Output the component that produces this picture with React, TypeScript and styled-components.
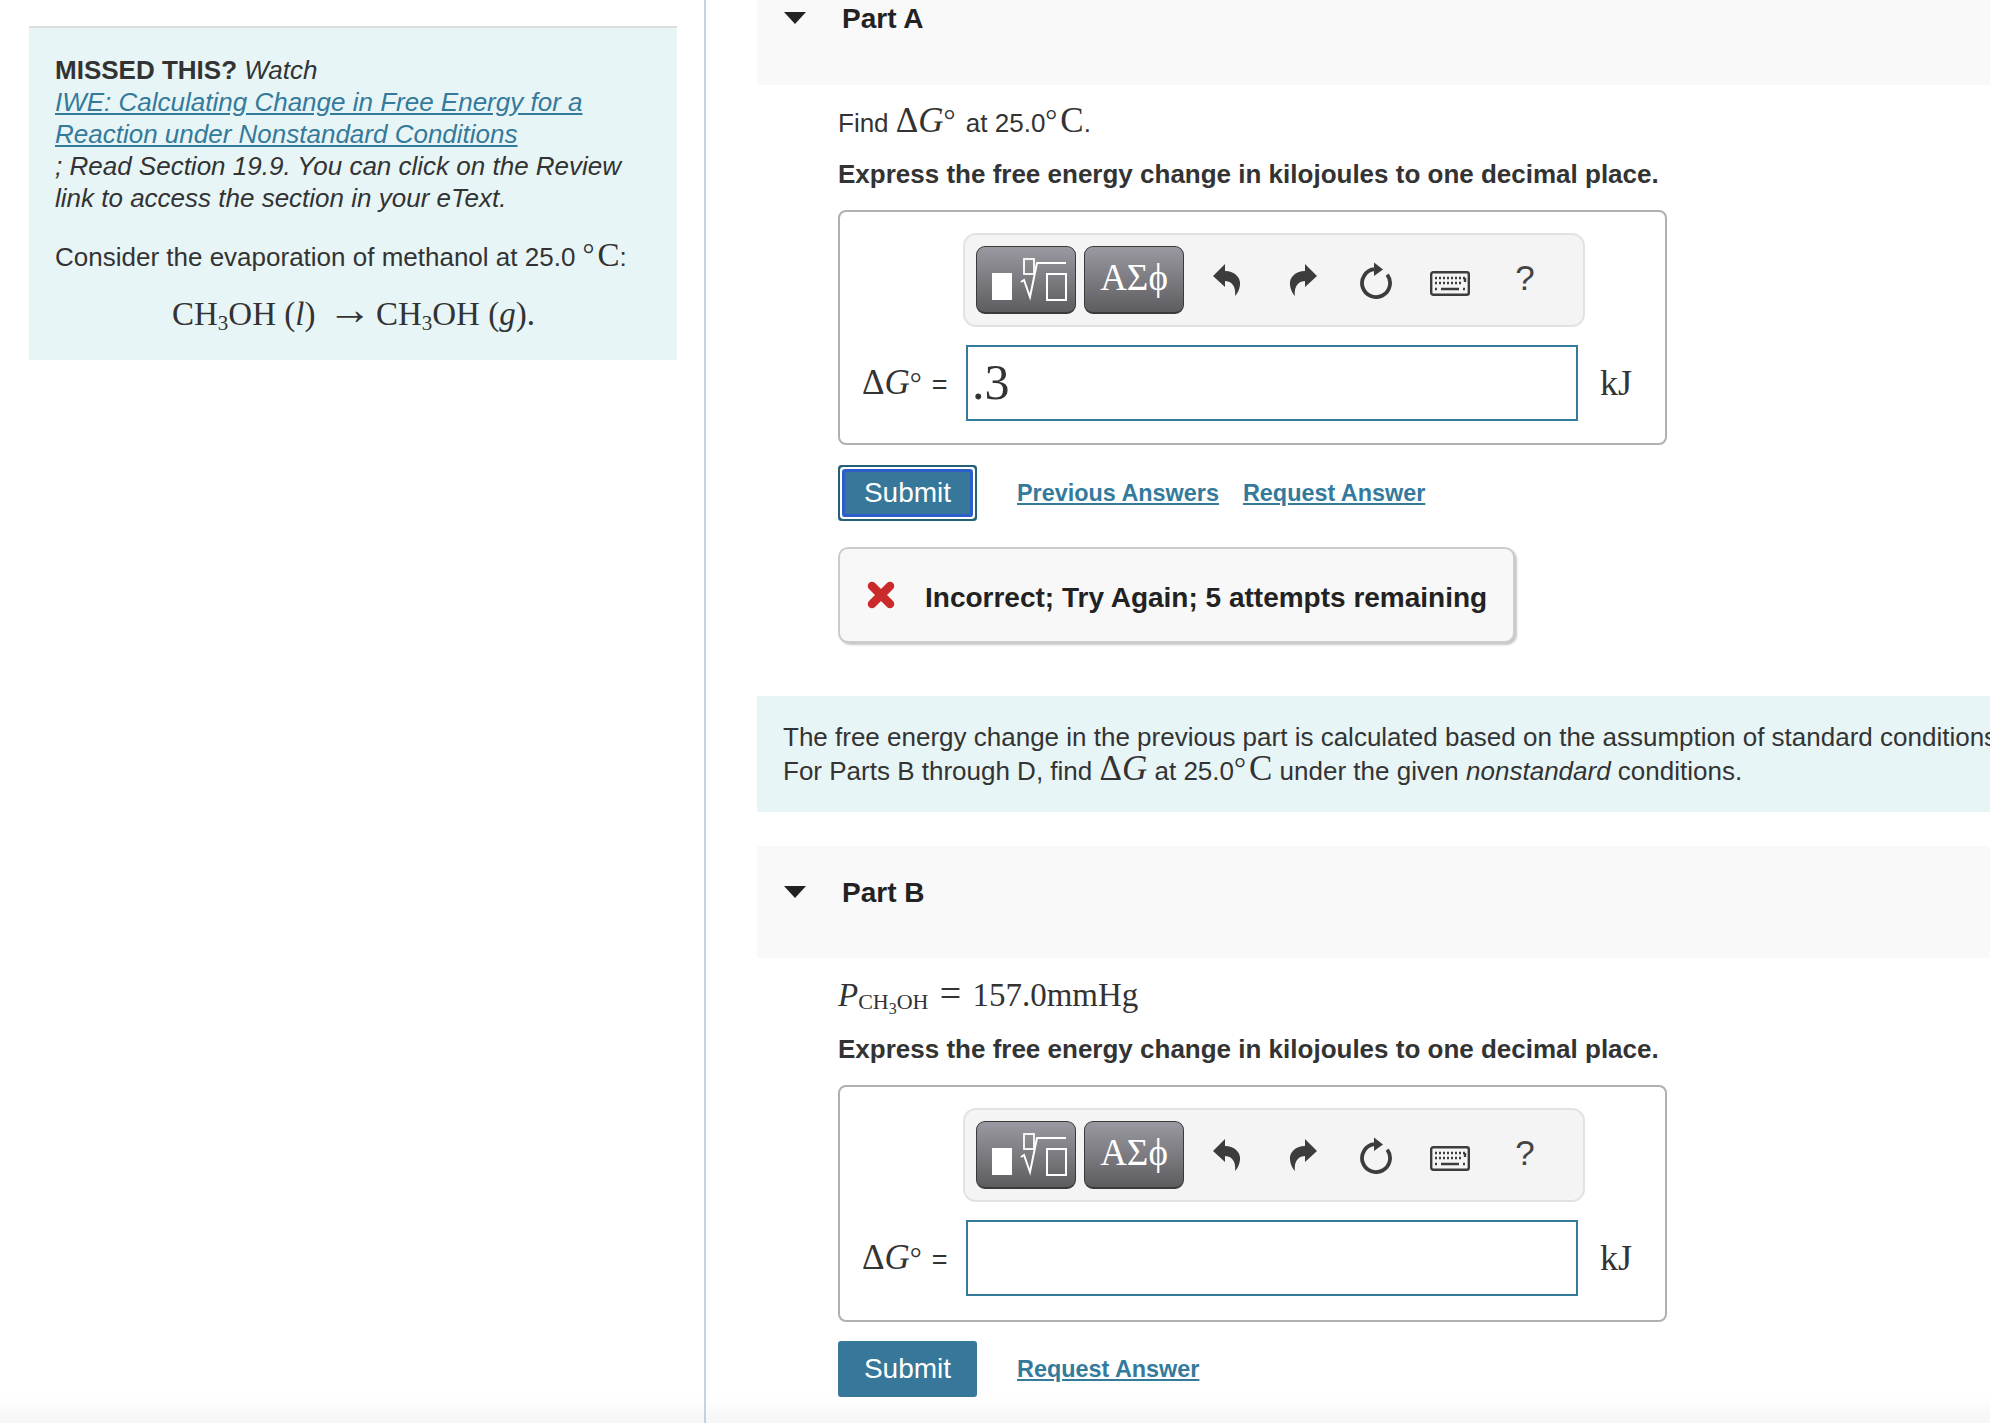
import styled, { createGlobalStyle } from "styled-components"

const GlobalStyle = createGlobalStyle`
    html, body {
        margin: 0;
        padding: 0;
        height: 100%;
        overflow: hidden;
        background: #ffffff;
    }
    body {
        font-family: "Liberation Sans", Arial, sans-serif;
        color: #333333;
    }
`

const Page = styled.div`
    display: grid;
    grid-template-columns: 704px 1fr;
    width: 1990px;
    height: 1423px;
    overflow: hidden;
    background: linear-gradient(to bottom, #ffffff 1396px, #f6f6f6 1423px);
`

const LeftPane = styled.aside`
    padding: 26px 27px 0 29px;
    border-right: 2px solid #c6d2e2;
    width: 706px;
    box-sizing: border-box;
`

const Hint = styled.div`
    background: #e8f5f6;
    border-top: 2px solid #dddddd;
    padding: 26px 26px 0;
    height: 334px;
    box-sizing: border-box;
    font-size: 26px;
    line-height: 32px;
`

const Para = styled.p`
    margin: 0;
`

const HintLink = styled.a`
    color: #347a9b;
    text-decoration: underline;
`

const Consider = styled.p`
    margin: 25px 0 0;
    white-space: nowrap;
`

const Equation = styled.div`
    font-family: "Liberation Serif", serif;
    font-size: 33px;
    line-height: 40px;
    margin-top: 21px;
    padding-left: 117px;
    white-space: nowrap;
`

const Sub = styled.sub`
    font-size: 21px;
    line-height: 0;
    vertical-align: -5px;
`

const Arrow = styled.span`
    display: inline-block;
    margin: 0 -4px 0 4px;
    font-size: 44px;
    line-height: 0;
    vertical-align: 1px;
`

const Serif = styled.span<{ $size?: number }>`
    font-family: "Liberation Serif", serif;
    font-size: ${(p) => p.$size ?? 35}px;
`

const Degree = styled.span`
    margin-right: 3px;
    font-family: "Liberation Serif", serif;
    font-size: 30px;
    line-height: 0;
    vertical-align: 2px;
`

const RightPane = styled.main`
    margin-left: 53px;
    min-width: 0;
    width: 1233px;
`

const PartHeader = styled.header<{ $height: number; $top: number }>`
    display: flex;
    align-items: flex-start;
    height: ${(p) => p.$height}px;
    padding: ${(p) => p.$top}px 0 0 27px;
    box-sizing: border-box;
    background: #f9f9f9;
`

const Caret = styled.span`
    width: 0;
    height: 0;
    margin-top: 10px;
    border-left: 11px solid transparent;
    border-right: 11px solid transparent;
    border-top: 12px solid #222222;
`

const PartTitle = styled.h2`
    margin: 1px 0 0 36px;
    font-size: 28px;
    line-height: 32px;
    font-weight: 700;
    color: #222222;
`

const PartBody = styled.section`
    padding-left: 81px;
`

const Prompt = styled.p`
    margin: 0;
    padding-top: 17px;
    height: 73px;
    box-sizing: border-box;
    font-size: 26px;
    line-height: 38px;
    white-space: nowrap;
`

const Instruction = styled.p`
    margin: 0;
    font-size: 26px;
    line-height: 32px;
    font-weight: 700;
    white-space: nowrap;
`

const AnswerBox = styled.div<{ $height: number }>`
    display: grid;
    grid-template-columns: 104px 612px 1fr;
    align-content: start;
    width: 829px;
    height: ${(p) => p.$height}px;
    margin-top: 20px;
    padding: 21px 22px 0;
    box-sizing: border-box;
    border: 2px solid #b0b0b0;
    border-radius: 8px;
`

const Toolbar = styled.div`
    grid-column: 2 / 4;
    display: flex;
    align-items: center;
    width: 622px;
    height: 94px;
    margin-left: -3px;
    padding-left: 11px;
    box-sizing: border-box;
    background: #f4f4f4;
    border: 2px solid #e2e2e2;
    border-radius: 13px;
`

const ToolButton = styled.div`
    display: flex;
    align-items: center;
    justify-content: center;
    width: 100px;
    height: 68px;
    margin-right: 8px;
    box-sizing: border-box;
    border: 1px solid #3a3a3a;
    border-bottom-width: 2px;
    border-radius: 9px;
    background: linear-gradient(to bottom, #9a99a1, #5d5d60);
    color: #ffffff;
`

const GreekLabel = styled.span`
    padding-bottom: 4px;
    font-family: "Liberation Serif", serif;
    font-size: 37px;
    line-height: 1;
`

const IconSlot = styled.div<{ $width: number; $drop?: number }>`
    display: flex;
    align-items: center;
    justify-content: center;
    width: ${(p) => p.$width}px;
    height: 64px;
    padding-top: ${(p) => p.$drop ?? 0}px;
    box-sizing: border-box;
    color: #3c3c3c;
`

const HelpMark = styled.span`
    margin-top: -4px;
    font-size: 35px;
    color: #444444;
`

const Label = styled.div`
    display: flex;
    align-items: center;
    margin-top: 18px;
    white-space: nowrap;
`

const Equals = styled.span`
    font-family: "Liberation Sans", sans-serif;
    font-size: 27px;
    margin: 4px 0 0 7px;
`

const Input = styled.div`
    display: flex;
    align-items: center;
    height: 76px;
    margin-top: 18px;
    padding: 0 0 3px 4px;
    box-sizing: border-box;
    border: 2px solid #347a9b;
    font-family: "Liberation Serif", serif;
    font-size: 50px;
    color: #333333;
`

const Unit = styled.div`
    display: flex;
    align-items: center;
    margin: 18px 0 0 22px;
    font-family: "Liberation Serif", serif;
    font-size: 36px;
`

const Actions = styled.div<{ $top: number }>`
    display: flex;
    align-items: center;
    margin-top: ${(p) => p.$top}px;
`

const SubmitButton = styled.div<{ $focused?: boolean }>`
    display: flex;
    align-items: center;
    justify-content: center;
    width: ${(p) => (p.$focused ? 125 : 139)}px;
    height: ${(p) => (p.$focused ? 42 : 56)}px;
    margin: ${(p) => (p.$focused ? "7px" : "0")};
    box-sizing: border-box;
    border-radius: ${(p) => (p.$focused ? "1px" : "3px")};
    background: #36779a;
    color: #ffffff;
    font-size: 28px;
    box-shadow: ${(p) => (p.$focused ? "0 0 0 3px #2d5fcb, 0 0 0 5px #ffffff, 0 0 0 7px #256078" : "none")};
`

const ActionLink = styled.a`
    margin-left: 24px;
    color: #347a9b;
    font-size: 23.4px;
    font-weight: 700;
    text-decoration: underline;
    white-space: nowrap;
    &:first-of-type {
        margin-left: 40px;
    }
`

const Feedback = styled.div`
    display: flex;
    align-items: center;
    width: 677px;
    height: 96px;
    margin-top: 26px;
    padding-left: 26px;
    box-sizing: border-box;
    background: #f8f8f8;
    border: 2px solid #cccccc;
    border-radius: 10px;
    box-shadow: 2px 2px 2px #c8c8c8;
`

const FeedbackText = styled.span`
    margin-left: 29px;
    padding-top: 6px;
    font-size: 28px;
    font-weight: 700;
    color: #222222;
    white-space: nowrap;
`

const Note = styled.div`
    height: 116px;
    margin-top: 53px;
    padding: 25px 0 0 26px;
    box-sizing: border-box;
    background: #e8f5f6;
    font-size: 26px;
    line-height: 32px;
    white-space: nowrap;
    overflow: hidden;
`

const PressureLine = styled.p`
    margin: 0;
    padding-top: 16px;
    height: 75px;
    box-sizing: border-box;
    font-family: "Liberation Serif", serif;
    font-size: 33px;
    line-height: 42px;
    white-space: nowrap;
`

const PressureSub = styled.sub`
    font-size: 22px;
    line-height: 0;
    vertical-align: -3px;
`

const TinySub = styled.sub`
    font-size: 16px;
    line-height: 0;
    vertical-align: -5px;
`

const PressureEquals = styled.span`
    margin: 0 3px;
    font-size: 38px;
    line-height: 0;
`

const PartBHeading = styled.div`
    margin-top: 34px;
`

const UndoIcon = ({ flip }: { flip?: boolean }) => (
    <svg width="28" height="32" viewBox="0 0 28 32" style={flip ? { transform: "scaleX(-1)" } : undefined}>
        <path
            fill="currentColor"
            d="M0 12 L12 0 V7 C22 7 28 14 27 21 C26.5 26 24 30 22 32 C23 26 21 17 12 17 V23 Z"
        />
    </svg>
)

const RefreshIcon = () => (
    <svg width="34" height="38" viewBox="0 0 34 38">
        <path fill="none" stroke="currentColor" strokeWidth="3.8" d="M28.2 13.6 A14 14 0 1 1 15 8.2" />
        <path fill="currentColor" d="M15 1.5 L24 8.5 L15 15 Z" />
    </svg>
)

const KeyboardIcon = () => (
    <svg width="40" height="25" viewBox="0 0 40 25">
        <rect x="1.2" y="1.2" width="37.6" height="22.6" rx="2" fill="none" stroke="currentColor" strokeWidth="2.4" />
        <path
            fill="none"
            stroke="currentColor"
            strokeWidth="2.4"
            strokeDasharray="2 2"
            d="M5 7 H35 M5 12 H33 M5 18 H8"
        />
        <path fill="none" stroke="currentColor" strokeWidth="2.4" d="M11 18 H29 M33 18 H35 M35 11 V7" />
    </svg>
)

const RadicalIcon = () => (
    <svg width="98" height="65" viewBox="0 0 98 65">
        <rect x="15" y="26" width="20" height="27" fill="#ffffff" />
        <rect x="47" y="12" width="10" height="15" fill="none" stroke="#ffffff" strokeWidth="1.8" />
        <path fill="none" stroke="#ffffff" strokeWidth="2" d="M44 35 L47 33 L53 50 L60 16 H89" />
        <rect x="70" y="27" width="19" height="26" fill="none" stroke="#ffffff" strokeWidth="2" />
    </svg>
)

const WrongIcon = () => (
    <svg width="30" height="30" viewBox="0 0 30 30">
        <path stroke="#cb2a2a" strokeWidth="8.5" strokeLinecap="round" d="M6 6 L24 24 M24 6 L6 24" />
    </svg>
)

const DeltaG = () => (
    <Serif>
        Δ<i>G</i>
    </Serif>
)

const AnswerArea = ({ value, height }: { value?: string; height: number }) => (
    <AnswerBox $height={height}>
        <Toolbar>
            <ToolButton>
                <RadicalIcon />
            </ToolButton>
            <ToolButton>
                <GreekLabel>ΑΣϕ</GreekLabel>
            </ToolButton>
            <IconSlot $width={70}>
                <UndoIcon />
            </IconSlot>
            <IconSlot $width={82}>
                <UndoIcon flip />
            </IconSlot>
            <IconSlot $width={64}>
                <RefreshIcon />
            </IconSlot>
            <IconSlot $width={84} $drop={6}>
                <KeyboardIcon />
            </IconSlot>
            <IconSlot $width={66}>
                <HelpMark>?</HelpMark>
            </IconSlot>
        </Toolbar>
        <Label>
            <DeltaG />
            <Degree>°</Degree>
            <Equals>=</Equals>
        </Label>
        <Input>{value}</Input>
        <Unit>kJ</Unit>
    </AnswerBox>
)

export default function App() {
    return (
        <Page>
            <GlobalStyle />
            <LeftPane>
                <Hint>
                    <Para>
                        <b>MISSED THIS?</b> <i>Watch</i>
                    </Para>
                    <Para>
                        <HintLink>
                            <i>
                                IWE: Calculating Change in Free Energy for a
                                <br />
                                Reaction under Nonstandard Conditions
                            </i>
                        </HintLink>
                    </Para>
                    <Para>
                        <i>
                            ; Read Section 19.9. You can click on the Review
                            <br />
                            link to access the section in your eText.
                        </i>
                    </Para>
                    <Consider>
                        Consider the evaporation of methanol at 25.0 <Degree>°</Degree>
                        <Serif $size={33}>C</Serif>:
                    </Consider>
                    <Equation>
                        CH<Sub>3</Sub>OH (<i>l</i>) <Arrow>→</Arrow> CH<Sub>3</Sub>OH (<i>g</i>).
                    </Equation>
                </Hint>
            </LeftPane>
            <RightPane>
                <PartHeader $height={85} $top={2}>
                    <Caret />
                    <PartTitle>Part A</PartTitle>
                </PartHeader>
                <PartBody>
                    <Prompt>
                        Find <DeltaG />
                        <Degree>°</Degree> at 25.0<Degree>°</Degree>
                        <Serif>C</Serif>.
                    </Prompt>
                    <Instruction>Express the free energy change in kilojoules to one decimal place.</Instruction>
                    <AnswerArea value=".3" height={235} />
                    <Actions $top={20}>
                        <SubmitButton $focused>Submit</SubmitButton>
                        <ActionLink>Previous Answers</ActionLink>
                        <ActionLink>Request Answer</ActionLink>
                    </Actions>
                    <Feedback>
                        <WrongIcon />
                        <FeedbackText>Incorrect; Try Again; 5 attempts remaining</FeedbackText>
                    </Feedback>
                </PartBody>
                <Note>
                    The free energy change in the previous part is calculated based on the assumption of standard conditions.
                    <br />
                    For Parts B through D, find <DeltaG /> at 25.0<Degree>°</Degree>
                    <Serif>C</Serif> under the given <i>nonstandard</i> conditions.
                </Note>
                <PartBHeading>
                    <PartHeader $height={112} $top={30}>
                        <Caret />
                        <PartTitle>Part B</PartTitle>
                    </PartHeader>
                </PartBHeading>
                <PartBody>
                    <PressureLine>
                        <i>P</i>
                        <PressureSub>
                            CH<TinySub>3</TinySub>OH
                        </PressureSub>{" "}
                        <PressureEquals>=</PressureEquals> 157.0mmHg
                    </PressureLine>
                    <Instruction>Express the free energy change in kilojoules to one decimal place.</Instruction>
                    <AnswerArea height={237} />
                    <Actions $top={19}>
                        <SubmitButton>Submit</SubmitButton>
                        <ActionLink>Request Answer</ActionLink>
                    </Actions>
                </PartBody>
            </RightPane>
        </Page>
    )
}
